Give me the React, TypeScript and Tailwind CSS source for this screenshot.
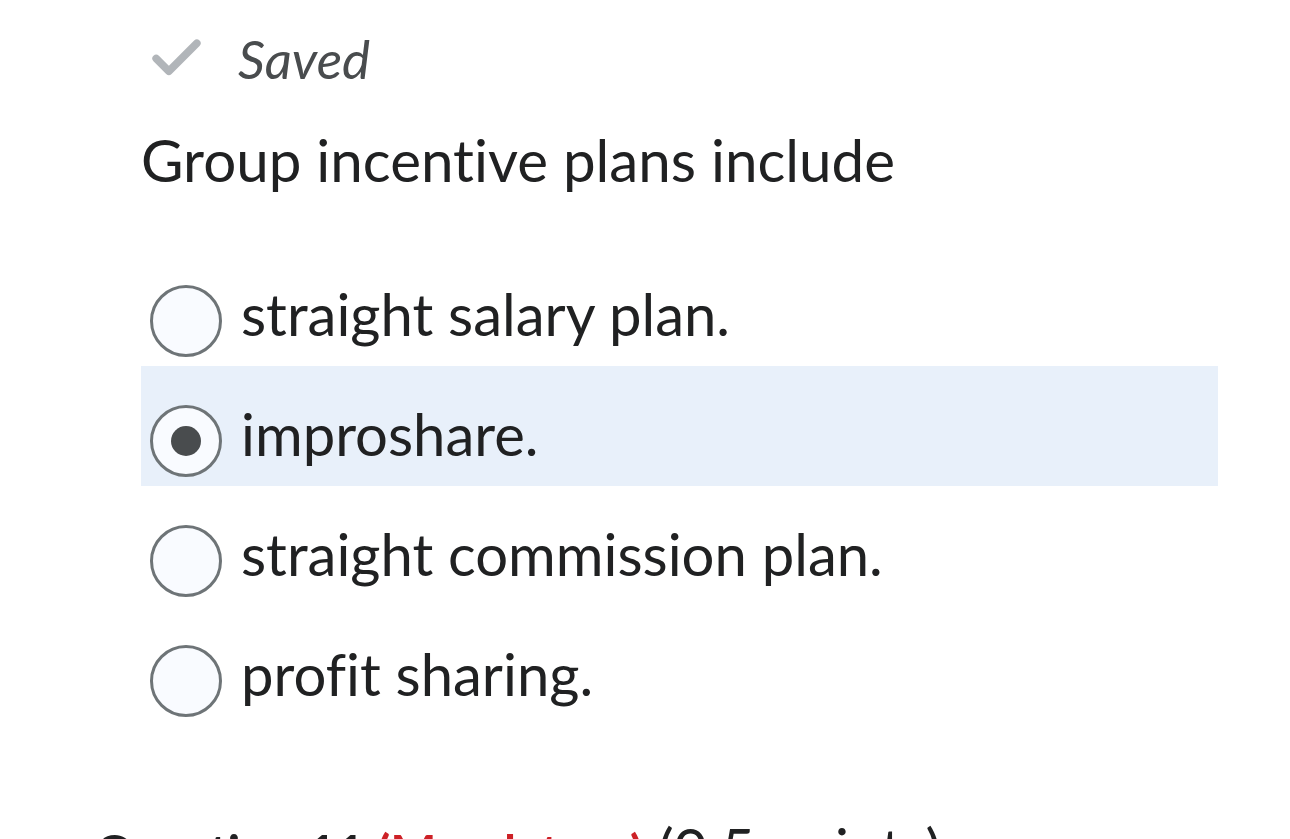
import { Check } from "lucide-react";

const options = [
  { label: "straight salary plan.", selected: false },
  { label: "improshare.", selected: true },
  { label: "straight commission plan.", selected: false },
  { label: "profit sharing.", selected: false },
];

const Radio = ({ checked }: { checked: boolean }) => {
  return (
    <div className="flex items-center justify-center w-[72px] h-[72px] shrink-0 rounded-full border-[3px] border-[#6e7477] bg-[#f9fbff]">
      {checked && <div className="w-[30px] h-[30px] rounded-full bg-[#494c4e]" />}
    </div>
  );
};

export default function App() {
  return (
    <div className="w-[1290px] h-[839px] overflow-hidden bg-white font-['Lato','Noto_Sans',sans-serif] text-[#202122] [font-variant-ligatures:none]">
      <div className="pl-[141px] pr-[72px]">
        {/* saved status */}
        <div className="flex items-center h-[116px] pl-[5px]">
          <Check className="w-[61px] h-[61px] shrink-0 text-[#b1b5b9]" strokeWidth={3} />
          <span className="ml-[31px] text-[53px] italic text-[#494c4e] leading-none">Saved</span>
        </div>

        <div className="mt-[14px] h-[58px] text-[58.3px] leading-[58px]">Group incentive plans include</div>

        <div className="mt-[58px]">
          {options.map((opt) => (
            <div
              key={opt.label}
              className={`flex items-start h-[120px] pt-[39px] pl-[9px] ${opt.selected ? "bg-[#e8f0fa]" : ""}`}
            >
              <Radio checked={opt.selected} />
              <span className="ml-[19px] text-[58px] leading-none">{opt.label}</span>
            </div>
          ))}
        </div>
      </div>

      <div className="pl-[95px] mt-[94px] text-[58px] leading-none whitespace-nowrap">
        <span className="text-[49px] font-bold">
          Question 11 <span className="text-[#cd2026]">(Mandatory)</span>
        </span>{" "}
        <span>(0.5 points)</span>
      </div>
    </div>
  );
}
